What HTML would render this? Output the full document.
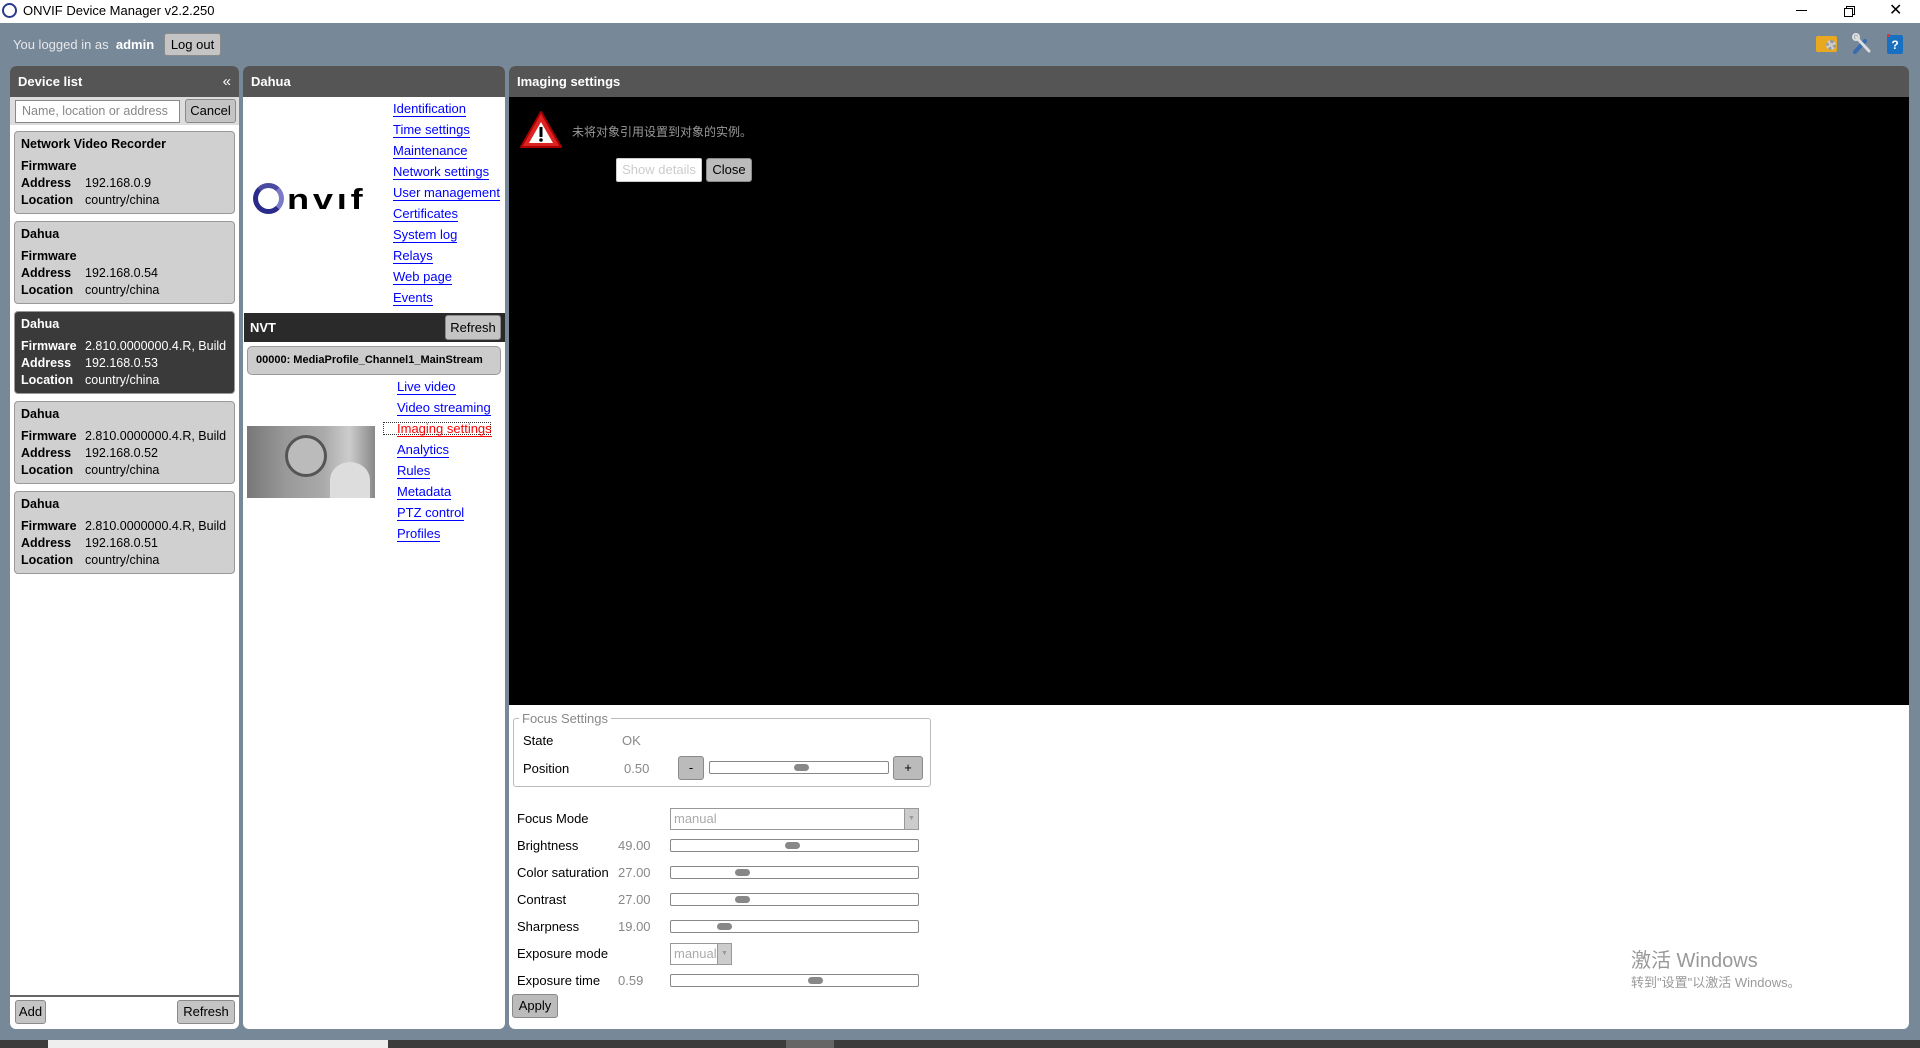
<!DOCTYPE html>
<html><head><meta charset="utf-8"><style>
*{box-sizing:border-box;margin:0;padding:0}
body{width:1920px;height:1048px;overflow:hidden;background:#778899;font-family:"Liberation Sans","Noto Sans CJK SC",sans-serif;font-size:13px;color:#000;position:relative}
.a{position:absolute}
.btn{position:absolute;background:#c4c4c4;border:1px solid #8a8a8a;border-radius:3px;text-align:center;font-size:13px;color:#000}
.hdr{position:absolute;background:#555;color:#fff;font-weight:bold;font-size:13px;padding-left:8px;line-height:31px;border-radius:6px 6px 0 0}
.card{position:absolute;left:14px;width:221px;height:83px;background:#d0d0d0;border:1px solid #999;border-radius:4px;overflow:hidden;font-size:12.5px}
.card.d{background:#3a3a3a;color:#fff}
.card div{position:absolute;left:6px;white-space:nowrap;width:210px;overflow:hidden}
.card b{display:inline-block;width:64px}
.lk{position:absolute;color:#0000ff;border-bottom:1px solid #0000ff;line-height:15px;white-space:nowrap}
.sl{position:absolute;left:670px;width:249px;height:13px;border:1px solid #888;border-radius:2px;background:#fff}
.th{position:absolute;top:2px;width:15px;height:7px;background:#888;border-radius:4px}
.lb{position:absolute;left:517px}
.vl{position:absolute;left:618px;color:#888}
</style></head><body>
<div class="a" style="left:0;top:0;width:1920px;height:23px;background:#fff"></div>
<div class="a" style="left:2px;top:3px;width:15px;height:15px;border-radius:50%;border:2px solid #2a3a8a"></div>
<div class="a" style="left:23px;top:3px;font-size:13px">ONVIF Device Manager v2.2.250</div>
<div class="a" style="left:1796px;top:10px;width:11px;height:1px;background:#000"></div>
<div class="a" style="left:1846px;top:6px;width:9px;height:9px;border:1px solid #000;background:#fff"></div>
<div class="a" style="left:1844px;top:8px;width:9px;height:9px;border:1px solid #000;background:#fff"></div>
<div class="a" style="left:1889px;top:0px;font-size:16px">✕</div>

<div class="a" style="left:13px;top:37px;color:#e8e8e8;font-size:13px">You logged in as &nbsp;<b style="color:#fff">admin</b></div>
<div class="btn" style="left:164px;top:33px;width:57px;height:23px;line-height:21px">Log out</div>
<div class="a" style="left:1816px;top:36px;width:21px;height:16px;background:#e8a820;border-radius:2px"></div>
<div class="a" style="left:1826px;top:40px;width:10px;height:10px;border-radius:50%;border:3px dotted #999;background:#ccc"></div>
<svg class="a" style="left:1851px;top:33px" width="22" height="22"><path d="M4 19 L14 8" stroke="#3a6ab0" stroke-width="4" stroke-linecap="round"/><path d="M5 4 L18 18" stroke="#ddd" stroke-width="3" stroke-linecap="round"/><circle cx="5" cy="4" r="3" fill="none" stroke="#ddd" stroke-width="2"/></svg>
<svg class="a" style="left:1885px;top:33px" width="20" height="22"><rect x="2" y="2" width="16" height="19" rx="2" fill="#1a70c0"/><rect x="2" y="1" width="3" height="3" fill="#d33"/><text x="10" y="16" font-size="12" font-weight="bold" fill="#fff" text-anchor="middle" font-family="Liberation Sans">?</text></svg>

<!-- Device list panel -->
<div class="a" style="left:10px;top:66px;width:229px;height:963px;background:#fff;border-radius:6px"></div>
<div class="hdr" style="left:10px;top:66px;width:229px;height:31px">Device list<span style="position:absolute;right:8px;font-weight:normal;font-size:15px">«</span></div>
<div class="a" style="left:10px;top:97px;width:229px;height:28px;background:#ddd"></div>
<div class="a" style="left:15px;top:100px;width:165px;height:23px;border:1px solid #888;background:#fff;color:#888;padding-left:6px;line-height:21px;font-size:12.5px;overflow:hidden;white-space:nowrap">Name, location or address</div>
<div class="btn" style="left:185px;top:99px;width:51px;height:24px;line-height:22px">Cancel</div>
<div class="card" style="top:131px"><div style="top:5px;font-weight:bold">Network Video Recorder</div><div style="top:27px"><b>Firmware</b></div><div style="top:44px"><b>Address</b>192.168.0.9</div><div style="top:61px"><b>Location</b>country/china</div></div>
<div class="card" style="top:221px"><div style="top:5px;font-weight:bold">Dahua</div><div style="top:27px"><b>Firmware</b></div><div style="top:44px"><b>Address</b>192.168.0.54</div><div style="top:61px"><b>Location</b>country/china</div></div>
<div class="card d" style="top:311px"><div style="top:5px;font-weight:bold">Dahua</div><div style="top:27px"><b>Firmware</b>2.810.0000000.4.R, Build</div><div style="top:44px"><b>Address</b>192.168.0.53</div><div style="top:61px"><b>Location</b>country/china</div></div>
<div class="card" style="top:401px"><div style="top:5px;font-weight:bold">Dahua</div><div style="top:27px"><b>Firmware</b>2.810.0000000.4.R, Build</div><div style="top:44px"><b>Address</b>192.168.0.52</div><div style="top:61px"><b>Location</b>country/china</div></div>
<div class="card" style="top:491px"><div style="top:5px;font-weight:bold">Dahua</div><div style="top:27px"><b>Firmware</b>2.810.0000000.4.R, Build</div><div style="top:44px"><b>Address</b>192.168.0.51</div><div style="top:61px"><b>Location</b>country/china</div></div>
<div class="a" style="left:10px;top:995px;width:229px;height:2px;background:#666"></div>
<div class="btn" style="left:15px;top:1000px;width:31px;height:24px;line-height:22px">Add</div>
<div class="btn" style="left:177px;top:1000px;width:58px;height:24px;line-height:22px">Refresh</div>

<!-- Middle panel -->
<div class="a" style="left:243px;top:66px;width:262px;height:963px;background:#fff;border-radius:6px"></div>
<div class="hdr" style="left:243px;top:66px;width:262px;height:31px">Dahua</div>
<div class="a" style="left:253px;top:183px;width:31px;height:31px;border-radius:50%;border:5px solid #2a2a8a;border-right-color:#7a7ac8;border-top-color:#4a4aa0"></div>
<div class="a" style="left:287px;top:184px;font-size:29px;font-weight:bold;letter-spacing:3px;line-height:33px;transform:scaleX(1.25);transform-origin:left">nvıf</div>
<div class="lk" style="left:393px;top:101px">Identification</div>
<div class="lk" style="left:393px;top:122px">Time settings</div>
<div class="lk" style="left:393px;top:143px">Maintenance</div>
<div class="lk" style="left:393px;top:164px">Network settings</div>
<div class="lk" style="left:393px;top:185px">User management</div>
<div class="lk" style="left:393px;top:206px">Certificates</div>
<div class="lk" style="left:393px;top:227px">System log</div>
<div class="lk" style="left:393px;top:248px">Relays</div>
<div class="lk" style="left:393px;top:269px">Web page</div>
<div class="lk" style="left:393px;top:290px">Events</div>
<div class="a" style="left:244px;top:313px;width:261px;height:29px;background:#2a2a2a;color:#fff;font-weight:bold;padding-left:6px;line-height:29px">NVT</div>
<div class="btn" style="left:445px;top:315px;width:56px;height:25px;line-height:23px">Refresh</div>
<div class="a" style="left:247px;top:346px;width:254px;height:29px;background:#ccc;border:1px solid #999;border-radius:5px;font-weight:bold;font-size:11px;padding-left:8px;line-height:27px">00000: MediaProfile_Channel1_MainStream</div>
<div class="lk" style="left:397px;top:379px">Live video</div>
<div class="lk" style="left:397px;top:400px">Video streaming</div>
<div class="a" style="left:383px;top:422px;width:108px;height:13px;border:1px dotted #333"></div>
<div class="lk" style="left:397px;top:421px;color:#f00;border-color:#f00">Imaging settings</div>
<div class="lk" style="left:397px;top:442px">Analytics</div>
<div class="lk" style="left:397px;top:463px">Rules</div>
<div class="lk" style="left:397px;top:484px">Metadata</div>
<div class="lk" style="left:397px;top:505px">PTZ control</div>
<div class="lk" style="left:397px;top:526px">Profiles</div>
<div class="a" style="left:247px;top:426px;width:128px;height:72px;background:linear-gradient(90deg,#777 0%,#999 30%,#aaa 60%,#ccc 80%,#888 100%)"></div>
<div class="a" style="left:285px;top:435px;width:42px;height:42px;border-radius:50%;border:3px solid #555;background:#bbb"></div>
<div class="a" style="left:330px;top:462px;width:40px;height:36px;border-radius:50% 50% 0 0;background:#ddd"></div>

<!-- Right panel -->
<div class="a" style="left:509px;top:66px;width:1400px;height:963px;background:#fff;border-radius:6px"></div>
<div class="hdr" style="left:509px;top:66px;width:1400px;height:31px">Imaging settings</div>
<div class="a" style="left:509px;top:97px;width:1400px;height:608px;background:#000"></div>
<svg class="a" style="left:519px;top:110px" width="44" height="40"><path d="M22 2 L42 37 L2 37 Z" fill="#d22" stroke="#a00" stroke-width="2" stroke-linejoin="round"/><path d="M22 12 L34 33 L10 33 Z" fill="#fff"/><rect x="20.5" y="17" width="3" height="10" fill="#000"/><circle cx="22" cy="30" r="1.8" fill="#000"/></svg>
<div class="a" style="left:572px;top:123px;color:#999;font-size:12px">未将对象引用设置到对象的实例。</div>
<div class="a" style="left:616px;top:158px;width:86px;height:24px;background:#fff;border:1px solid #ccc;color:#ccc;text-align:center;line-height:22px;border-radius:2px">Show details</div>
<div class="btn" style="left:706px;top:158px;width:46px;height:24px;line-height:22px;background:#bbb">Close</div>

<div class="a" style="left:513px;top:718px;width:418px;height:69px;border:1px solid #bbb;border-radius:3px"></div>
<div class="a" style="left:519px;top:711px;background:#fff;color:#888;padding:0 3px">Focus Settings</div>
<div class="a" style="left:523px;top:733px">State</div>
<div class="a" style="left:622px;top:733px;color:#888">OK</div>
<div class="a" style="left:523px;top:761px">Position</div>
<div class="a" style="left:624px;top:761px;color:#888">0.50</div>
<div class="btn" style="left:678px;top:756px;width:26px;height:24px;line-height:22px;background:#bbb">-</div>
<div class="sl" style="left:709px;top:761px;width:180px"><div class="th" style="left:84px"></div></div>
<div class="btn" style="left:893px;top:756px;width:30px;height:24px;line-height:22px;background:#bbb">+</div>

<div class="lb" style="top:811px">Focus Mode</div>
<div class="a" style="left:670px;top:808px;width:249px;height:22px;border:1px solid #999;color:#aaa;padding-left:3px;line-height:20px">manual<div class="a" style="right:0;top:0;width:14px;height:20px;background:#ccc;border-left:1px solid #999;font-size:7px;text-align:center;color:#999">▼</div></div>
<div class="lb" style="top:838px">Brightness</div><div class="vl" style="top:838px">49.00</div>
<div class="sl" style="top:839px"><div class="th" style="left:114px"></div></div>
<div class="lb" style="top:865px">Color saturation</div><div class="vl" style="top:865px">27.00</div>
<div class="sl" style="top:866px"><div class="th" style="left:64px"></div></div>
<div class="lb" style="top:892px">Contrast</div><div class="vl" style="top:892px">27.00</div>
<div class="sl" style="top:893px"><div class="th" style="left:64px"></div></div>
<div class="lb" style="top:919px">Sharpness</div><div class="vl" style="top:919px">19.00</div>
<div class="sl" style="top:920px"><div class="th" style="left:46px"></div></div>
<div class="lb" style="top:946px">Exposure mode</div>
<div class="a" style="left:670px;top:943px;width:62px;height:22px;border:1px solid #999;color:#aaa;padding-left:3px;line-height:20px">manual<div class="a" style="right:0;top:0;width:14px;height:20px;background:#ccc;border-left:1px solid #999;font-size:7px;text-align:center;color:#999">▼</div></div>
<div class="lb" style="top:973px">Exposure time</div><div class="vl" style="top:973px">0.59</div>
<div class="sl" style="top:974px"><div class="th" style="left:137px"></div></div>
<div class="btn" style="left:512px;top:994px;width:46px;height:24px;line-height:22px;background:#bbb">Apply</div>

<div class="a" style="left:1631px;top:944px;color:#999;font-size:20px">激活 Windows</div>
<div class="a" style="left:1631px;top:972px;color:#999;font-size:13px">转到"设置"以激活 Windows。</div>

<div class="a" style="left:0;top:1040px;width:1920px;height:8px;background:#3c3c3c"></div>
<div class="a" style="left:48px;top:1040px;width:340px;height:8px;background:#eee"></div>
<div class="a" style="left:786px;top:1040px;width:48px;height:8px;background:#666"></div>
</body></html>
